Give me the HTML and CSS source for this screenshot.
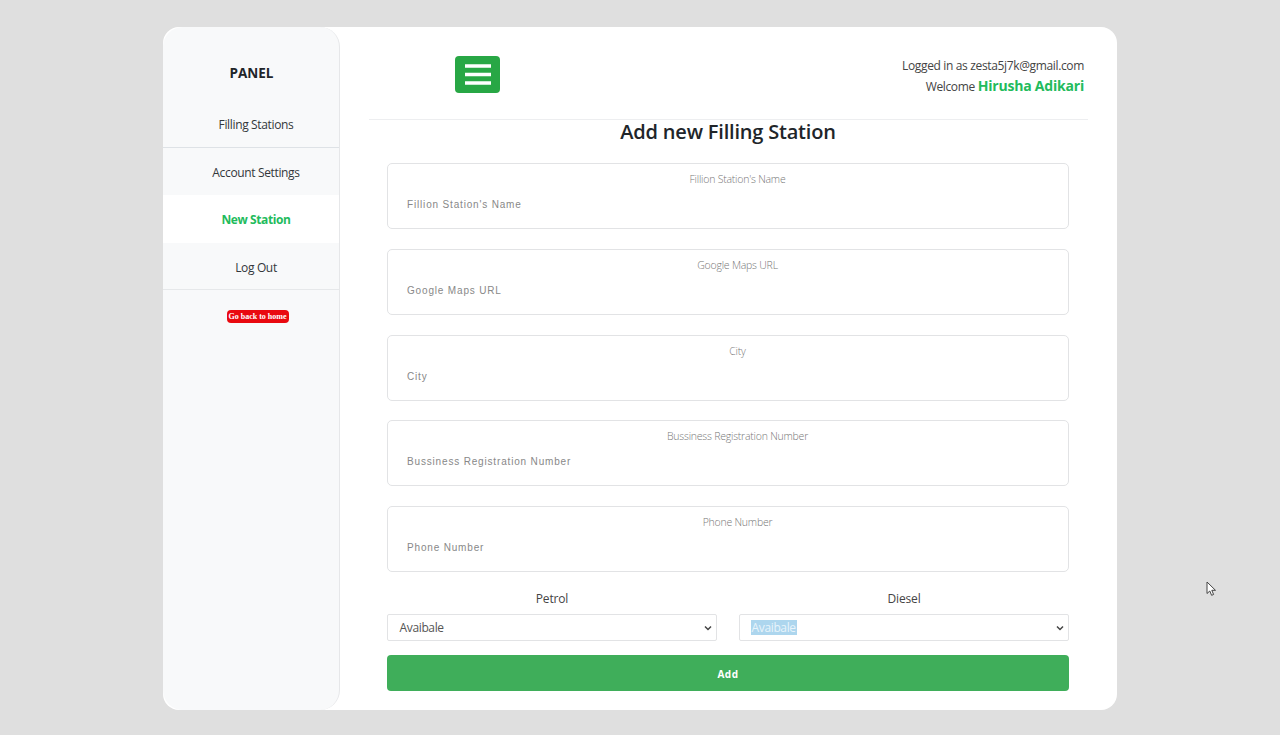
FILE: index.html
```html
<!DOCTYPE html>
<html lang="en">
<head>
<meta charset="utf-8">
<title>Add new Filling Station</title>
<link rel="stylesheet" href="styles.css">
</head>
<body>
<div class="card">
  <aside class="sidebar">
    <h2 class="brand">PANEL</h2>
    <nav class="nav">
      <a class="nav-item ruled">Filling Stations</a>
      <a class="nav-item">Account Settings</a>
      <a class="nav-item active">New Station</a>
      <a class="nav-item ruled soft">Log Out</a>
    </nav>
    <div class="home-wrap"><a class="home-btn">Go back to home</a></div>
  </aside>
  <main class="main">
    <header class="topbar">
      <button class="menu-btn" aria-label="Menu">
        <svg width="26" height="21" viewBox="0 0 26 21"><path d="M0 2h26M0 10.500h26M0 19h26" stroke="#fff" stroke-width="3.600"/></svg>
      </button>
      <div class="user">
        <div class="user-mail">Logged in as zesta5j7k@gmail.com</div>
        <div class="user-name">Welcome <strong>Hirusha Adikari</strong></div>
      </div>
    </header>
    <h1 class="title">Add new Filling Station</h1>
    <form class="form">
      <div class="field"><div class="field-label">Fillion Station's Name</div><div class="field-input">Fillion Station's Name</div></div>
      <div class="field"><div class="field-label">Google Maps URL</div><div class="field-input">Google Maps URL</div></div>
      <div class="field"><div class="field-label">City</div><div class="field-input">City</div></div>
      <div class="field"><div class="field-label">Bussiness Registration Number</div><div class="field-input">Bussiness Registration Number</div></div>
      <div class="field"><div class="field-label">Phone Number</div><div class="field-input">Phone Number</div></div>
      <div class="selects">
        <div class="select-col">
          <div class="select-label">Petrol</div>
          <div class="select-box"><span>Avaibale</span>
            <svg class="chev" width="8" height="6" viewBox="0 0 8 6"><path d="M1 1.500l3 3 3-3" fill="none" stroke="#444" stroke-width="1.500"/></svg>
          </div>
        </div>
        <div class="select-col">
          <div class="select-label">Diesel</div>
          <div class="select-box"><span class="selected">Avaibale</span>
            <svg class="chev" width="8" height="6" viewBox="0 0 8 6"><path d="M1 1.500l3 3 3-3" fill="none" stroke="#444" stroke-width="1.500"/></svg>
          </div>
        </div>
      </div>
      <button class="submit" type="button">Add</button>
    </form>
  </main>
</div>
<svg class="cursor" width="11" height="16" viewBox="0 0 11 16"><path d="M1 1v11.500l2.800-2.500 1.800 4.300 2-.8-1.800-4.200h3.700z" fill="#fff" stroke="#444" stroke-width="1"/></svg>
</body>
</html>
```
FILE: styles.css
```css
* { box-sizing: border-box; }
html, body { margin: 0; height: 735px; overflow: hidden; }
body {
  background: #dfdfdf;
  font-family: "Open Sans", "Noto Sans", sans-serif;
  color: #212529;
  padding: 27px 163px 25px;
  position: relative;
}
.card {
  width: 954px;
  height: 683px;
  background: #fff;
  border-radius: 16px;
  display: flex;
}
.sidebar {
  width: 177px;
  flex: none;
  background: #f8f9fa;
  border-right: 1px solid #e6e7e9;
  border-radius: 20px;
  overflow: hidden;
}
.brand {
  margin: 0;
  height: 73px;
  padding: 35px 0 0 1px;
  font-size: 13.500px;
  line-height: 22px;
  font-weight: 700;
  text-align: center;
}
.nav-item {
  display: flex;
  align-items: center;
  justify-content: center;
  height: 47.500px;
  padding: 2px 0 0 10px;
  font-size: 12px;
  font-weight: 400;
  letter-spacing: -0.350px;
  color: #33373b;
}
.ruled { border-bottom: 1px solid #dee2e6; }
.soft { padding-top: 3px; border-bottom-color: #e6e8ea; }
.active { background: #fff; color: #22bb5c; font-weight: 700; letter-spacing: -0.400px; }
.home-wrap { display: flex; justify-content: center; padding: 20px 0 0 13px; }
.home-btn {
  display: block;
  width: 62px;
  height: 13px;
  background: #e9090f;
  color: #fff;
  border-radius: 4px;
  font: 700 8px/13px "Liberation Serif", serif;
  text-align: center;
  white-space: nowrap;
}
.main {
  width: 719px;
  margin-left: 29px;
  flex: none;
}
.topbar {
  height: 93px;
  border-bottom: 1px solid #edeef0;
  display: flex;
  justify-content: space-between;
  padding: 29px 4px 0 86px;
}
.menu-btn {
  width: 45px;
  height: 37px;
  background: #28a745;
  border: 0;
  border-radius: 4px;
  padding: 0;
  display: flex;
  align-items: center;
  justify-content: center;
}
.user { text-align: right; font-size: 12px; color: #444; letter-spacing: -0.350px; }
.user-mail { line-height: 18px; margin-top: 1px; }
.user-name { line-height: 21px; }
.user-name strong { color: #22bb5c; font-size: 14px; font-weight: 700; letter-spacing: -0.200px; }
.title {
  margin: 0;
  font-size: 20px;
  line-height: 24px;
  font-weight: 600;
  letter-spacing: -0.200px;
  text-align: center;
  width: 718px;
}
.form { width: 682px; margin: 19px 0 0 18px; display: flex; flex-direction: column; }
.field {
  height: 66px;
  margin-bottom: 19.750px;
  border: 1px solid #e2e3e5;
  border-radius: 5px;
  padding: 0 19px;
  flex: none;
}
.field-label {
  height: 32px;
  padding-top: 6px;
  padding-left: 19px;
  font-size: 10.500px;
  line-height: 18px;
  font-weight: 300;
  letter-spacing: -0.220px;
  text-align: center;
  color: #777;
}
.field-input {
  font: 400 10px/18px "Liberation Sans", sans-serif;
  letter-spacing: 0.830px;
  color: #888;
}
.selects { display: flex; gap: 22px; margin-top: -2px; }
.select-col { width: 330px; }
.select-label {
  height: 24px;
  text-align: center;
  font-size: 12px;
  line-height: 18px;
  letter-spacing: -0.150px;
  color: #444;
}
.select-box {
  height: 27px;
  border: 1px solid #e2e3e5;
  border-radius: 2px;
  display: flex;
  align-items: center;
  justify-content: space-between;
  padding: 1px 4px 0 11.500px;
  font-size: 12px;
  letter-spacing: -0.350px;
  color: #555;
}
.selected { background: #add6ee; color: #e8f4fb; line-height: 15px; padding: 0 1px; margin-left: -1px; }
.submit {
  margin-top: 14px;
  height: 36px;
  padding-top: 3px;
  background: #3fae5a;
  border: 0;
  border-radius: 4px;
  color: #fff;
  font: 700 10px/12px "Open Sans", sans-serif;
  letter-spacing: 0.500px;
  flex: none;
}
.cursor { position: absolute; left: 1206px; top: 581px; }
```
